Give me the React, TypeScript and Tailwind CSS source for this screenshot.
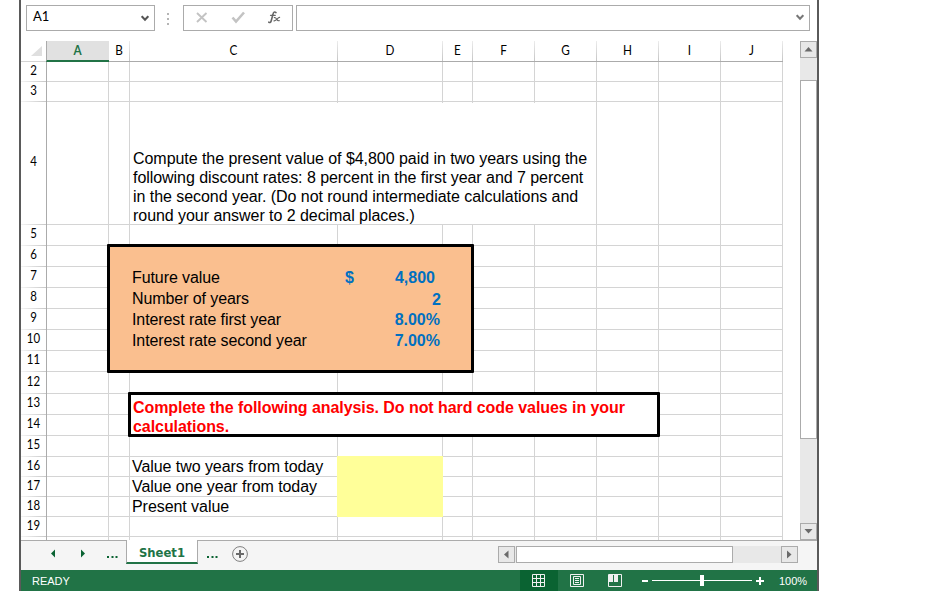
import React from 'react';

const COLUMNS = ['A', 'B', 'C', 'D', 'E', 'F', 'G', 'H', 'I', 'J'];
const ROWS = [2, 3, 4, 5, 6, 7, 8, 9, 10, 11, 12, 13, 14, 15, 16, 17, 18, 19];

const INPUTS = [
  { label: 'Future value', value: '4,800', currency: true },
  { label: 'Number of years', value: '2' },
  { label: 'Interest rate first year', value: '8.00%' },
  { label: 'Interest rate second year', value: '7.00%' },
];

const OUTPUTS = ['Value two years from today', 'Value one year from today', 'Present value'];

const Chevron: React.FC<{ className?: string }> = ({ className }) => (
  <svg className={className} width="8" height="7" viewBox="0 0 8 7" fill="none" stroke="currentColor" strokeWidth="2">
    <path d="M0.7 1.2 L4 4.8 L7.3 1.2" />
  </svg>
);

const FormulaBar: React.FC = () => (
  <div className="flex h-[31px] pl-[5px] pt-[5px]">
    <div className="flex h-[26px] w-[129px] items-start justify-between border border-[#ababab] pl-1.5 pr-[5px]">
      <span className="pt-0.5 font-['Lato'] text-[13px] leading-[16px] text-black">A1</span>
      <Chevron className="mt-[9px] text-[#555]" />
    </div>
    <div className="ml-3 mt-2 flex w-0.5 flex-col gap-[3px]">
      <i className="h-0.5 w-0.5 bg-[#b5b5b5]" />
      <i className="h-0.5 w-0.5 bg-[#b5b5b5]" />
      <i className="h-0.5 w-0.5 bg-[#b5b5b5]" />
    </div>
    <div className="ml-[14px] flex h-[26px] w-[110px] border border-[#ababab]">
      <svg width="108" height="24" viewBox="0 0 108 24" fill="none">
        <path d="M13 7 L22.5 16 M22.5 7 L13 16" stroke="#c3c3c3" strokeWidth="1.9" />
        <path d="M48.5 11.5 L52 15.5 L60 6.5" stroke="#c3c3c3" strokeWidth="2.6" />
        {/* fx mark */}
        <g stroke="#666" strokeLinecap="round">
          <path d="M92 6.6 C90.6 5.4 89.4 6 89 8 L87.3 14.5 C86.9 16.4 86 16.9 84.8 16.2" strokeWidth="1.6" />
          <path d="M86.5 9.3 H91.3" strokeWidth="1.2" />
          <path d="M90.3 11.6 C92.6 10.6 92.6 15.8 95.2 14.6 M95.6 11.4 C94 11 92.2 15.4 90 14.8" strokeWidth="1.2" />
        </g>
      </svg>
    </div>
    <div className="ml-[3px] flex h-[26px] w-[514px] justify-end border border-[#ababab] pr-[5px] pt-2">
      <Chevron className="text-[#777]" />
    </div>
  </div>
);

const ColumnHeader: React.FC = () => (
  <div className="grid h-[21px] w-[762px] grid-cols-[26px_62px_21px_208px_105px_30px_62px_62px_62px_62px_62px] text-center font-['Lato'] text-[13px] leading-[19px] text-black">
    <div className="flex border-b border-[#d4d4d4] pl-[10px] pt-[5px]">
      <svg width="11" height="10" viewBox="0 0 11 10"><path d="M11 0 V10 H0 Z" fill="#dfdfdf" /></svg>
    </div>
    {COLUMNS.map(col =>
      col === 'A' ? (
        <div key={col} className="-ml-px border-b-2 border-l border-b-[#217346] border-l-[#ababab] bg-[#e1e1e1] font-bold leading-[18px] text-[#217346]">
          <span className="inline-block scale-x-90">A</span>
        </div>
      ) : (
        <div key={col} className="flex border-b border-[#ababab]">
          <span className="grow scale-x-90">{col}</span>
          <i className="h-5 w-px bg-linear-to-b from-[#ececec] to-[#c6c6c6]" />
        </div>
      )
    )}
  </div>
);

const Sheet: React.FC = () => (
  <div className="grid h-[478px] w-[762px] grid-cols-[26px_62px_21px_208px_105px_30px_62px_62px_62px_62px_62px] grid-rows-[20px_20px_123px_21px_21px_21px_21px_21px_21px_21px_22px_21px_21px_21px_20px_20px_20px_20px_3px] overflow-hidden text-[16px] text-black">
    {ROWS.map((row, r) => (
      <React.Fragment key={row}>
        <div className="flex flex-col border-r border-[#ababab]" style={{ gridRow: r + 1, gridColumn: 1 }}>
          <span className="flex grow scale-x-[.88] items-center justify-center pb-[3px] font-['Lato'] text-[13px] leading-none">{row}</span>
          <i className="h-px bg-linear-to-r from-[#f4f4f4] to-[#c8c8c8]" />
        </div>
        {COLUMNS.map((col, c) => (
          <div key={col} className="border-b border-r border-[#d4d4d4]" style={{ gridRow: r + 1, gridColumn: c + 2 }} />
        ))}
      </React.Fragment>
    ))}
    <div className="col-start-1 row-start-19 border-r border-[#ababab]" />
    {COLUMNS.map((col, c) => (
      <div key={col} className="border-r border-[#d4d4d4]" style={{ gridRow: 19, gridColumn: c + 2 }} />
    ))}

    {/* Merged question text, C4:G4 */}
    <div className="z-10 col-start-4 col-end-9 row-start-3 mt-px flex items-end whitespace-nowrap border-b border-r border-[#d4d4d4] bg-white pl-[3px] leading-[19px] tracking-[-0.05px]">
      <p className="-mb-px">
        Compute the present value of $4,800 paid in two years using the<br />
        following discount rates: 8 percent in the first year and 7 percent<br />
        in the second year. (Do not round intermediate calculations and<br />
        round your answer to 2 decimal places.)
      </p>
    </div>

    {/* Inputs, B6:E11 */}
    <div className="z-10 col-start-3 col-end-7 row-start-5 row-end-11 -mb-px -ml-0.5 -mr-px -mt-0.5 rounded-[1px] border-[3px] border-black bg-[#fabf8f] pl-[22px] pt-5">
      {INPUTS.map(input => (
        <div key={input.label} className="flex h-[21px] items-center">
          <span className="w-[213px] tracking-[-0.09px]">{input.label}</span>
          <span className="w-5 font-bold text-[#0070c0]">{input.currency ? '$' : ''}</span>
          <span
            className={`w-[76px] text-right font-bold text-[#0070c0] ${
              input.currency ? 'pr-1.5' : input.value === '2' ? 'pt-0.5' : 'pr-px'
            }`}
          >
            {input.value}
          </span>
        </div>
      ))}
    </div>

    {/* Instruction, C13:H14 */}
    <div className="z-10 col-start-4 col-end-10 row-start-12 row-end-14 -mb-px -ml-0.5 -mr-px -mt-0.5 overflow-hidden rounded-[1px] border-[3px] border-black bg-white pl-0.5 pt-[3px] font-bold leading-[19px] tracking-[-0.065px] text-[#ff0000]">
      Complete the following analysis. Do not hard code values in your<br />
      calculations.
    </div>

    {OUTPUTS.map((label, i) => (
      <div key={label} className="z-10 flex items-center whitespace-nowrap pl-0.5 leading-none tracking-[-0.06px]" style={{ gridRow: 15 + i, gridColumn: 4 }}>
        {label}
      </div>
    ))}
    <div className="z-10 col-start-5 row-start-15 row-end-18 -ml-px -mt-px bg-[#ffff99]" />
  </div>
);

const ScrollButton: React.FC<{ path: string }> = ({ path }) => (
  <div className="h-[17px] w-[17px] shrink-0 border border-[#ababab] bg-[#e8e8e8]">
    <svg width="15" height="15" viewBox="0 0 15 15"><path d={path} fill="#6a6a6a" /></svg>
  </div>
);

const VerticalScroll: React.FC = () => (
  <div className="flex w-[17px] flex-col bg-[#e8e8e8]">
    <ScrollButton path="M7.5 5 L11.5 9.5 H3.5 Z" />
    <div className="mt-[22px] h-[359px] border border-[#ababab] bg-white" />
    <div className="grow" />
    <ScrollButton path="M7.5 9.5 L11.5 5 H3.5 Z" />
  </div>
);

const TabBar: React.FC = () => (
  <div className="flex h-[30px] bg-[#f5f5f5] font-['DejaVu_Sans'] text-[12px] font-bold text-[#217346]">
    <div className="flex w-[105px] border-t border-[#ababab]">
      <svg width="105" height="28" viewBox="0 0 105 28" fill="#0a6332">
        <path d="M30 12.5 L34 8.5 V16.5 Z" />
        <path d="M64 12.5 L60 8.5 V16.5 Z" />
        <path d="M86 15h2v2h-2z M90.5 15h2v2h-2z M94.5 15h2v2h-2z" />
      </svg>
    </div>
    <div className="h-6 w-[72px] border-x border-b-2 border-x-[#ababab] border-b-[#217346] bg-white text-center text-[11.6px] leading-[26px]">Sheet1</div>
    <div className="flex grow items-start border-t border-[#ababab] pt-[5px]">
      <svg className="-mt-[5px]" width="60" height="28" viewBox="0 0 60 28">
        <path d="M9 15h2v2h-2z M13.5 15h2v2h-2z M17.5 15h2v2h-2z" fill="#0a6332" />
        <circle cx="42" cy="13" r="7.4" fill="none" stroke="#808080" />
        <path d="M38 13 H46 M42 9 V17" stroke="#6a6a6a" strokeWidth="2" />
      </svg>
      <div className="ml-auto mr-[19px] flex w-[300px] bg-[#e8e8e8]">
        <ScrollButton path="M5 7.5 L9.5 3.5 V11.5 Z" />
        <div className="ml-px h-[17px] w-[217px] border border-[#ababab] bg-white" />
        <div className="grow" />
        <ScrollButton path="M9.5 7.5 L5 3.5 V11.5 Z" />
      </div>
    </div>
  </div>
);

const StatusBar: React.FC = () => (
  <div className="flex h-[21px] items-center bg-[#217346] pl-[11px] pr-[10px] text-[11px] text-white">
    <span className="mr-auto pt-0.5">READY</span>
    <div className="h-[21px] w-[38px] bg-[#0a6332] pl-3 pt-1">
      <svg width="13" height="13" viewBox="0 0 13 13" fill="none" stroke="#f0f0f0">
        <path d="M.5 .5h12v12h-12z M4.5 0v13 M8.5 0v13 M0 4.5h13 M0 8.5h13" />
      </svg>
    </div>
    <svg className="ml-3" width="190" height="21" viewBox="0 0 190 21" fill="none" stroke="#f0f0f0">
      <path d="M.5 4.5h13v12h-13z M3.5 6.5h7v8h-7z M5 8.5h4 M5 10.5h4 M5 12.5h4" />
      <path d="M38.5 4.5h13v12h-13z" />
      <path d="M39 4h4v8h-4z M44 4h4v8h-4z" fill="#f0f0f0" stroke="none" />
      <path d="M72 10h6v2h-6z M130 5h4v11h-4z M186 10h4v2h-4z" fill="#fff" stroke="none" />
      <path d="M82 10.5h100" stroke="#fff" />
    </svg>
    <svg className="-ml-1 mr-[15px]" width="8" height="21" viewBox="0 0 8 21">
      <path d="M0 10h8v2h-8z M3 7h2v8h-2z" fill="#fff" />
    </svg>
    <span className="w-[28px] pt-0.5">100%</span>
  </div>
);

const App: React.FC = () => {
  return (
    <div className="h-[591px] overflow-hidden bg-white pl-[19px] font-['Liberation_Sans',sans-serif]">
      <div className="flex h-[591px] w-[800px] flex-col border-x-2 border-[#5a5a5a]">
        <FormulaBar />
        <div className="mt-[10px] flex h-[499px] justify-between">
          <div>
            <ColumnHeader />
            <Sheet />
          </div>
          <VerticalScroll />
        </div>
        <TabBar />
        <StatusBar />
      </div>
    </div>
  );
};

export default App;
